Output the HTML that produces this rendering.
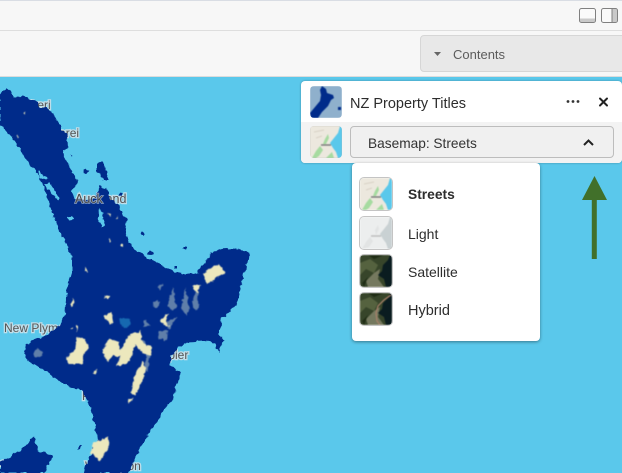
<!DOCTYPE html>
<html><head><meta charset="utf-8">
<style>
html,body{margin:0;padding:0}
body{width:622px;height:473px;overflow:hidden;position:relative;background:#5ac8eb;font-family:"Liberation Sans","DejaVu Sans",sans-serif;color:#2f2f2f}
.abs{position:absolute}
.t{position:absolute;white-space:nowrap;line-height:18px}
.thumb{position:absolute;width:32px;height:32px;border-radius:4px;overflow:hidden}
.thumb svg{display:block;filter:blur(.6px)}
</style></head><body>
<svg class="abs" style="left:0;top:0" width="622" height="473" viewBox="0 0 622 473" font-family="Liberation Sans, sans-serif">
<defs>
<filter id="rough" x="-5%" y="-5%" width="110%" height="110%" color-interpolation-filters="sRGB"><feTurbulence type="fractalNoise" baseFrequency=".18" numOctaves="2" seed="4"/><feDisplacementMap in="SourceGraphic" scale="5" xChannelSelector="R" yChannelSelector="G"/><feGaussianBlur stdDeviation=".35"/></filter>
<filter id="rough2" x="-5%" y="-5%" width="110%" height="110%" color-interpolation-filters="sRGB"><feTurbulence type="fractalNoise" baseFrequency=".25" numOctaves="2" seed="9"/><feDisplacementMap in="SourceGraphic" scale="4" xChannelSelector="R" yChannelSelector="G"/><feGaussianBlur stdDeviation=".4"/></filter>
</defs>
<rect width="622" height="473" fill="#5ac8eb"/>
<g font-size="12" fill="#555" stroke="#d8e4ea" stroke-width="2.500" paint-order="stroke" stroke-opacity=".8">
<text x="10" y="109">Kerikeri</text>
<text x="21" y="137">Whangarei</text>
<text x="75" y="203" font-size="12.500">Auckland</text>
<text x="4" y="332">New Plymouth</text>
<text x="153" y="359">Napier</text>
<text x="-24" y="467">Nelson</text>
<text x="85" y="470">Wellington</text>
<text x="82" y="400">Patea</text>
</g>
<g filter="url(#rough)">
<path fill="#002b8a" d="M0 95 L5 92 L7 88 L11 90 L12 94 L13 98 L23 96 L37 102 L39 108 L46 108 L54 114 L57 122 L61 127 L67 134 L68 147 L62 153 L66 160 L71 170 L78 182 L75 187 L72 191 L75 198 L85 200 L92 199 L97 193 L100 186 L106 189 L108 194 L110 200 L118 204 L122 213 L127 220 L125 228 L129 243 L137 251 L147 257 L160 264 L172 271 L187 274 L198 272 L205 262 L212 252 L222 249 L233 248 L241 250 L250 255 L247 262 L245 270 L241 285 L237 303 L230 313 L222 318 L220 328 L220 337 L225 340 L221 345 L218 353 L215 343 L205 341 L187 342 L176 350 L171 356 L171 366 L182 373 L178 380 L177 385 L173 400 L167 406 L158 420 L150 432 L143 443 L135 458 L129 473 L84 473 L89 458 L97 440 L95 426 L92 413 L88 402 L82 390 L70 387 L57 380 L48 372 L38 367 L28 362 L24 351 L27 344 L33 340 L46 335 L57 328 L62 322 L65 313 L66 298 L68 283 L72 273 L72 256 L66 243 L60 232 L54 216 L47 198 L44 185 L37 173 L30 165 L22 152 L13 138 L6 131 L0 125 Z"/>
<path fill="#5ac8eb" d="M38 169 L43 175 L48 178 L44 180 L40 178 Z M45 184 L49 182 L56 192 L59 200 L54 197 Z M98 208 L103 212 L102 218 L105 224 L102 228 L99 222 Z M67 217 L72 216 L73 220 L68 221 Z M175 362 L177 361 L176 367 Z"/>
<path fill="#002b8a" d="M97 163 L103 162 L107 173 L109 180 L104 180 L97 172 Z M86 169 A2.500 2.500 0 1 0 86.100 169 Z M70 155 L73 156 L71 157 Z M120 192 L123 193 L122 197 L118 196 Z M142 232 A2 2 0 1 0 142.100 232 Z M150 250 A2.500 2.500 0 1 0 150.100 250 Z M150 259 h2 v2 h-2 Z M174 266 h3 v3 h-3 Z M185 246 A1.500 1.500 0 1 0 185.100 246 Z M0 463 L10 457 L18 452 L28 444 L33 436 L36 440 L37 450 L45 453 L53 456 L48 466 L44 473 L0 473 Z M79 446 L82 445 L81 449 L78 450 Z"/>
</g>
<g font-size="12.500" fill="#4a4a4a" stroke="#c8d8e0" stroke-width="1.500" paint-order="stroke" stroke-opacity=".7"><text x="75" y="203">Auck</text></g>
<g filter="url(#rough2)">
<g fill="#607fa9">
<path d="M168 306 L173 287 L175 302 L177 308 L172 310 Z"/>
<path d="M181 308 L186 287 L189 310 L186 316 Z"/>
<path d="M197 287 L192 302 L195 311 L199 306 Z"/>
<path d="M167 322 L177 316 L172 326 L168 330 Z"/>
<path d="M158 331 L168 331 L167 340 L159 339 Z M153 302 L160 301 L158 308 L154 308 Z M157 286 L163 284 L160 290 Z M145 320 L150 325 L143 327 Z M143 340 L147 345 L142 348 Z M146 352 L150 352 L148 372 L145 368 Z M36 349 A4 4 0 1 0 40 357 A4 4 0 1 0 36 349 Z"/>
</g>
<g fill="#ecE8bd">
<path d="M66 358 L75 350 L77 337 L85 339 L89 348 L83 354 L83 364 L69 364 Z"/>
<path d="M102 350 L110 339 L118 342 L121 351 L128 336 L140 331 L143 343 L152 347 L151 356 L142 353 L135 344 L133 354 L126 364 L116 366 L121 356 L113 356 L108 361 L104 356 Z"/>
<path d="M131 393 L134 377 L143 361 L146 370 L141 384 L135 396 Z"/>
<path d="M94 443 L108 437 L110 446 L100 461 L90 453 Z"/>
<path d="M203 273 L218 264 L225 272 L207 284 Z"/>
<path d="M193 285 L200 285 L198 293 L194 289 Z"/>
<path d="M160 320 L168 313 L166 322 L170 327 L165 325 Z"/>
<path d="M70 305 L73 298 L75 303 L72 307 Z M103 297 L110 295 L108 299 Z M103 316 L112 313 L113 322 L110 325 L107 320 Z M128 399 L133 398 L129 404 Z M108 213 L111 214 L110 218 Z M115 218 L118 216 L117 219 Z M109 238 L111 241 L109 243 Z M121 244 h2 v3 h-2 Z M84 267 L88 272 L85 272 Z M24 113 L26 112 L24 116 Z M17 135 L19 137 L17 138 Z M93 373 L97 369 L95 374 Z M76 325 L78 326 L76 333 Z M70 328 h3 v1 h-3 Z"/>
</g>
<path fill="#1668b0" d="M119 318 L130 318 L131 325 L125 329 L120 323 Z"/>
</g>
</svg>

<!-- top chrome -->
<div class="abs" style="left:0;top:0;width:622px;height:77px;background:#f7f7f7;box-shadow:inset 0 1px 0 #d9dde4"></div>
<div class="abs" style="left:0;top:30px;width:622px;height:1px;background:#dedede"></div>
<div class="abs" style="left:0;top:76px;width:622px;height:1px;background:#dcdcdc"></div>
<div class="abs" style="left:420px;top:35px;width:204px;height:35px;background:#e8e8e8;border:1px solid #d6d6d6;border-radius:4px"></div>
<svg class="abs" style="left:433px;top:52px" width="9" height="5"><path d="M1 0H8L4.500 4Z" fill="#666"/></svg>
<div class="t" style="left:453px;top:46px;font-size:13px;color:#5c5c5c">Contents</div>
<svg class="abs" style="left:578px;top:7px" width="42" height="18" fill="none">
<rect x="1.500" y="1.500" width="16" height="14" rx="2" fill="#fafafa"/>
<path d="M2 11.500H17V13.500Q17 15 15.500 15H3.500Q2 15 2 13.500Z" fill="#c9c9c9"/>
<rect x="1.500" y="1.500" width="16" height="14" rx="2" stroke="#808080"/>
<rect x="23.500" y="1.500" width="16" height="14" rx="2" fill="#fafafa"/>
<path d="M34 2H37.500Q39 2 39 3.500V13.500Q39 15 37.500 15H34Z" fill="#c9c9c9"/>
<path d="M34 2V15" stroke="#808080"/>
<rect x="23.500" y="1.500" width="16" height="14" rx="2" stroke="#808080"/>
</svg>

<!-- panel -->
<div class="abs" style="left:301px;top:81px;width:321px;height:82px;background:#fff;border-radius:4px;overflow:hidden;box-shadow:0 0 2px rgba(0,0,0,.3)">
<div class="abs" style="left:0;top:41px;width:321px;height:41px;background:#f3f3f3"></div>
</div>
<div class="thumb" style="left:310px;top:86px"><svg width="32" height="32"><rect width="32" height="32" fill="#8fb0cc"/><path fill="#002b8a" d="M12 0 L16 3 L17 7 L23 9 L24 12 L21 14 L18 20 L12 26 L8 32 L1 32 L0 27 L5 21 L10 15 L11 9 L10 4 Z M28 21 h3 v3 h-3 Z"/></svg></div>
<div class="t" style="left:350px;top:95px;font-size:14.500px;color:#2d2d2d">NZ Property Titles</div>
<svg class="abs" style="left:565px;top:97px" width="46" height="12"><g fill="#333"><circle cx="3" cy="4.500" r="1.400"/><circle cx="8" cy="4.500" r="1.400"/><circle cx="13" cy="4.500" r="1.400"/></g><path d="M35 1.500L42 8.500M42 1.500L35 8.500" stroke="#222" stroke-width="2" stroke-linecap="round"/></svg>

<div class="thumb" style="left:310px;top:126px;box-shadow:inset 0 0 0 1px #bbb"><svg width="32" height="32" viewBox="0 0 32 32"><use href="#st"/></svg></div>
<div class="abs" style="left:350px;top:126px;width:262px;height:30px;background:#f0f0f0;border:1px solid #bdbdbd;border-radius:4px"></div>
<div class="t" style="left:368px;top:135px;font-size:13.700px;color:#333">Basemap: Streets</div>
<svg class="abs" style="left:582px;top:138px" width="13" height="9"><path d="M2 7L6.500 2.500L11 7" fill="none" stroke="#222" stroke-width="2"/></svg>

<!-- dropdown -->
<div class="abs" style="left:352px;top:163px;width:188px;height:178px;background:#fff;border-radius:4px;box-shadow:0 1px 3px rgba(0,0,0,.4)"></div>
<div class="thumb" style="left:360px;top:178px;box-shadow:0 0 0 1px #c4c4c4"><svg width="32" height="32" viewBox="0 0 32 32"><defs><g id="st"><rect width="32" height="32" fill="#ece8de"/><path d="M32 0V32H28L26 26L23 22L20 17L24 12L28 7L30 0Z" fill="#5ac8eb"/><path d="M2 32L6 25L10 20L13 24L9 30L6 32Z M15 13L18 8L19 12L16 18L13 18Z M18 30L22 26L24 32H16Z" fill="#a6dba0"/><path d="M11 19H21" stroke="#777" stroke-width="1.400"/><path d="M4 6L14 4M6 12L12 10" stroke="#d8d2c6"/></g><g id="sat"><rect width="32" height="32" fill="#37452a"/><path d="M0 8L10 4L18 10L14 18L6 14L0 20Z" fill="#55623f"/><path d="M6 26L14 18L20 14L18 24L24 32H8Z" fill="#75795f"/><path d="M14 4L24 0H8Z M2 28L8 22L4 32Z" fill="#202d15"/><path d="M32 0V32H26L24 24L18 20L22 16L23 10L28 5L30 0Z" fill="#0a1c20"/></g></defs><use href="#st"/></svg></div>
<div class="thumb" style="left:360px;top:217px;box-shadow:0 0 0 1px #c4c4c4"><svg width="32" height="32"><rect width="32" height="32" fill="#eceeee"/><path d="M32 0V32H28L26 26L23 22L20 17L24 12L28 7L30 0Z" fill="#c9d1d3"/><path d="M11 19H21" stroke="#bbb" stroke-width="1.400"/><path d="M2 32L6 25L10 20L13 24L9 30Z M15 13L18 8L19 12L16 18Z" fill="#e2e4e4"/></svg></div>
<div class="thumb" style="left:360px;top:255px;box-shadow:0 0 0 1px #c4c4c4"><svg width="32" height="32"><use href="#sat"/></svg></div>
<div class="thumb" style="left:360px;top:293px;box-shadow:0 0 0 1px #c4c4c4"><svg width="32" height="32"><use href="#sat"/><path d="M31 2L24 7L18 13L16 20L17 28L20 32" fill="none" stroke="#a8806a" stroke-width="1.200"/></svg></div>
<div class="t" style="left:408px;top:186px;font-size:13.800px;font-weight:bold;color:#2d2d2d">Streets</div>
<div class="t" style="left:408px;top:225px;font-size:14px;color:#2d2d2d">Light</div>
<div class="t" style="left:408px;top:263px;font-size:14px;color:#2d2d2d">Satellite</div>
<div class="t" style="left:408px;top:302px;font-size:14.500px;color:#2d2d2d">Hybrid</div>

<!-- arrow -->
<svg class="abs" style="left:578px;top:172px" width="32" height="90"><path d="M16.500 4L29 28H18.800V87H13.800V28H4Z" fill="#41702a"/></svg>
</body></html>
